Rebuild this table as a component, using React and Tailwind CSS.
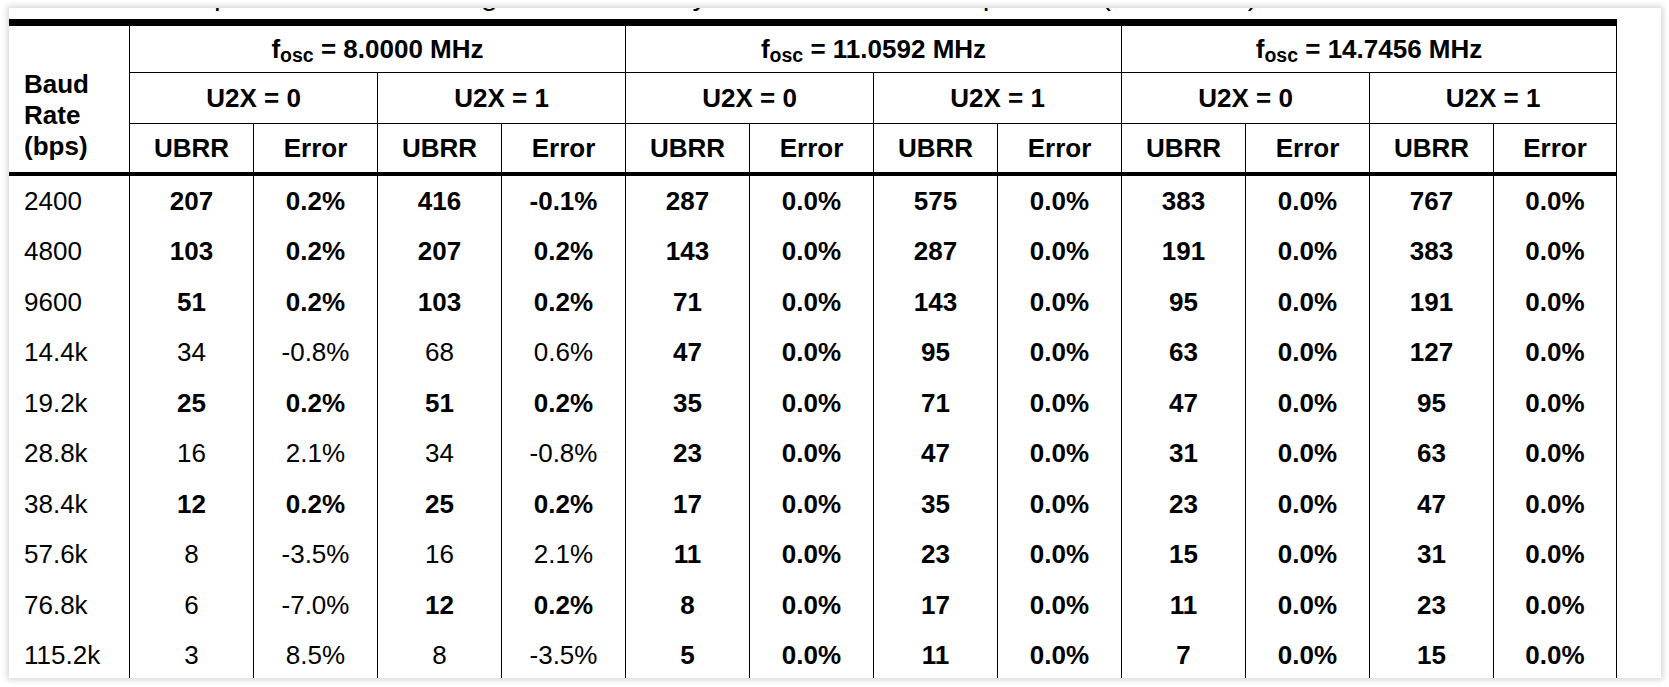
const GROUPS = ['8.0000', '11.0592', '14.7456']

// [baud, [ubrr, error, bold] x 6]
const ROWS = [
  ['2400', [['207', '0.2%', 1], ['416', '-0.1%', 1], ['287', '0.0%', 1], ['575', '0.0%', 1], ['383', '0.0%', 1], ['767', '0.0%', 1]]],
  ['4800', [['103', '0.2%', 1], ['207', '0.2%', 1], ['143', '0.0%', 1], ['287', '0.0%', 1], ['191', '0.0%', 1], ['383', '0.0%', 1]]],
  ['9600', [['51', '0.2%', 1], ['103', '0.2%', 1], ['71', '0.0%', 1], ['143', '0.0%', 1], ['95', '0.0%', 1], ['191', '0.0%', 1]]],
  ['14.4k', [['34', '-0.8%', 0], ['68', '0.6%', 0], ['47', '0.0%', 1], ['95', '0.0%', 1], ['63', '0.0%', 1], ['127', '0.0%', 1]]],
  ['19.2k', [['25', '0.2%', 1], ['51', '0.2%', 1], ['35', '0.0%', 1], ['71', '0.0%', 1], ['47', '0.0%', 1], ['95', '0.0%', 1]]],
  ['28.8k', [['16', '2.1%', 0], ['34', '-0.8%', 0], ['23', '0.0%', 1], ['47', '0.0%', 1], ['31', '0.0%', 1], ['63', '0.0%', 1]]],
  ['38.4k', [['12', '0.2%', 1], ['25', '0.2%', 1], ['17', '0.0%', 1], ['35', '0.0%', 1], ['23', '0.0%', 1], ['47', '0.0%', 1]]],
  ['57.6k', [['8', '-3.5%', 0], ['16', '2.1%', 0], ['11', '0.0%', 1], ['23', '0.0%', 1], ['15', '0.0%', 1], ['31', '0.0%', 1]]],
  ['76.8k', [['6', '-7.0%', 0], ['12', '0.2%', 1], ['8', '0.0%', 1], ['17', '0.0%', 1], ['11', '0.0%', 1], ['23', '0.0%', 1]]],
  ['115.2k', [['3', '8.5%', 0], ['8', '-3.5%', 0], ['5', '0.0%', 1], ['11', '0.0%', 1], ['7', '0.0%', 1], ['15', '0.0%', 1]]],
]

const grid = 'grid w-[1608px] grid-cols-[120px_repeat(12,minmax(0,1fr))]'

export default function App() {
  return (
    <div className="h-[687px] w-full overflow-hidden bg-white pt-[8px] pl-[9px] font-['Liberation_Sans',Arial,sans-serif] text-black">
      <div className="h-[670px] w-[1652px] overflow-hidden bg-white shadow-[0_0_6px_2px_rgba(0,0,0,0.16)]">
        {/* caption, mostly cut off by the crop */}
        <div className="h-[11px] overflow-hidden">
          <p className="mt-[-28px] ml-[-10px] whitespace-nowrap text-[30px] leading-[30px]">
            Table 62.&nbsp;&nbsp;Examples of UBRR Settings for Commonly Used Oscillator Frequencies (Continued)
          </p>
        </div>

        <div className="h-[7px] w-[1608px] bg-black" />

        {/* header */}
        <div className={`${grid} grid-rows-[47px_51px_48px] text-[26px] font-bold`}>
          <div className="row-span-3 flex items-end pb-[10px] pl-[15px] leading-[31px]">
            <span>Baud<br />Rate<br />(bps)</span>
          </div>
          {GROUPS.map((g, i) => (
            <div key={g} className={`col-span-4 flex items-center justify-center border-b border-l border-black ${i === 2 ? 'border-r' : ''}`}>
              <span>f<sub>osc</sub> = {g} MHz</span>
            </div>
          ))}
          {[0, 1, 2, 3, 4, 5].map(i => (
            <div key={i} className={`col-span-2 flex items-center justify-center border-b border-l border-black ${i === 5 ? 'border-r' : ''}`}>
              U2X = {i % 2}
            </div>
          ))}
          {[0, 1, 2, 3, 4, 5].map(i => [
            <div key={'u' + i} className="flex items-center justify-center border-l border-black">UBRR</div>,
            <div key={'e' + i} className={`flex items-center justify-center border-l border-black ${i === 5 ? 'border-r' : ''}`}>Error</div>,
          ])}
        </div>

        {/* body */}
        <div className="w-[1608px] border-t-4 border-black text-[26px]">
          {ROWS.map(([baud, cells]) => (
            <div key={baud} className={`${grid} h-[50.5px]`}>
              <div className="flex items-center pl-[15px]">{baud}</div>
              {cells.map(([u, e, b], i) => [
                <div key={'u' + i} className={`flex items-center justify-center border-l border-black ${b ? 'font-bold' : ''}`}>{u}</div>,
                <div key={'e' + i} className={`flex items-center justify-center border-l border-black ${b ? 'font-bold' : ''} ${i === 5 ? 'border-r' : ''}`}>{e}</div>,
              ])}
            </div>
          ))}
        </div>
      </div>
    </div>
  )
}
